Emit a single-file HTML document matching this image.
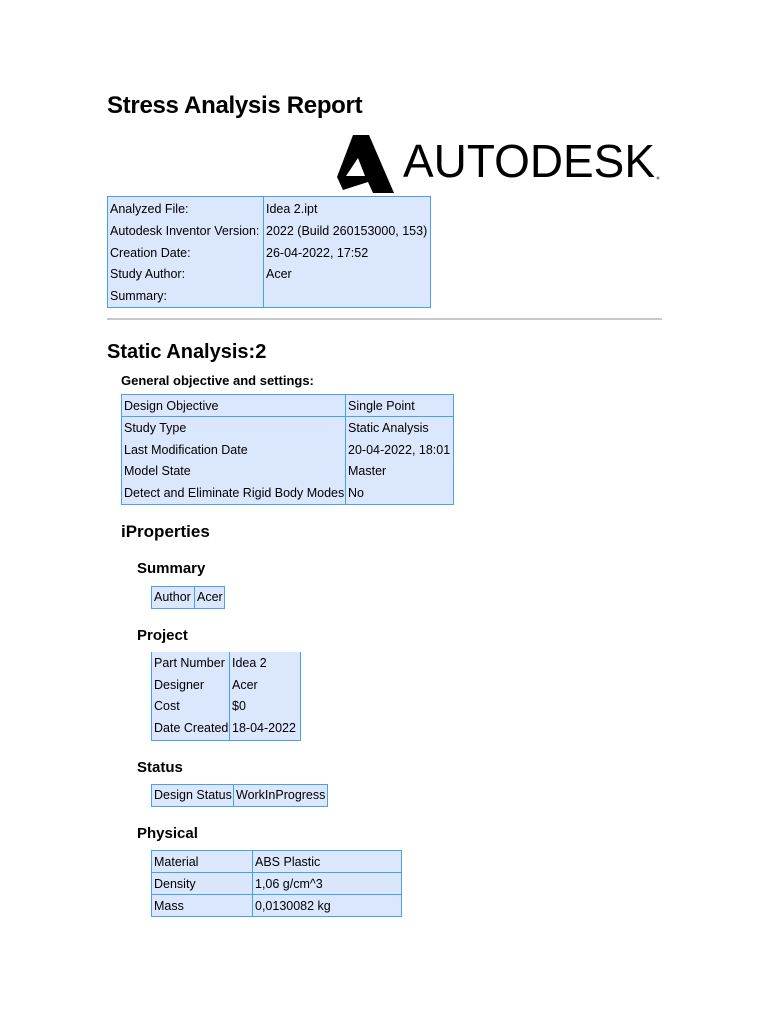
<!DOCTYPE html>
<html><head><meta charset="utf-8">
<style>
html,body{margin:0;padding:0;background:#fff;width:768px;height:1024px;overflow:hidden;position:relative;font-family:"DejaVu Sans Condensed","Liberation Sans",sans-serif;color:#000}
.a{position:absolute;white-space:nowrap}
.h{font-family:"Liberation Sans",sans-serif;font-weight:bold}
.t{position:absolute;background:#dbe7fc;border:1px solid #4a9ff0;box-sizing:border-box}
.v{position:absolute;top:0;bottom:0;width:1px;background:#4a9ff0}
.r{position:absolute;left:0;right:0;height:1px;background:#4a9ff0}
.c{position:absolute;font-family:"Liberation Sans",sans-serif;font-size:12.5px;line-height:20px;white-space:nowrap}
</style></head><body>
<div class="a h" style="left:107px;top:92px;font-size:24px;letter-spacing:-0.3px">Stress Analysis Report</div>
<svg class="a" style="left:0;top:0" width="768" height="220">
<path fill-rule="evenodd" d="M353,135 L369,135 L394,193 L373,193 L368,182 L343,190 L337,177 Z M358,158 L346,176 L365,176 Z" fill="#000"/>
<text x="403" y="177" font-family="Liberation Sans" font-size="46" fill="#000" textLength="252" lengthAdjust="spacingAndGlyphs">AUTODESK</text>
<circle cx="658" cy="178" r="1.5" fill="#888"/>
</svg>

<div class="t" style="left:107px;top:196px;width:324px;height:112px">
<div class="v" style="left:155px"></div>
<div class="c" style="left:2px;top:2px">Analyzed File:</div><div class="c" style="left:158px;top:2px">Idea 2.ipt</div>
<div class="c" style="left:2px;top:24px">Autodesk Inventor Version:</div><div class="c" style="left:158px;top:24px">2022 (Build 260153000, 153)</div>
<div class="c" style="left:2px;top:46px">Creation Date:</div><div class="c" style="left:158px;top:46px">26-04-2022, 17:52</div>
<div class="c" style="left:2px;top:67px">Study Author:</div><div class="c" style="left:158px;top:67px">Acer</div>
<div class="c" style="left:2px;top:89px">Summary:</div>
</div>

<div class="a" style="left:107px;top:318px;width:555px;height:2px;background:#c8c8c8"></div>

<div class="a h" style="left:107px;top:341px;font-size:20px">Static Analysis:2</div>
<div class="a h" style="left:121px;top:373px;font-size:13px">General objective and settings:</div>
<div class="t" style="left:121px;top:394px;width:333px;height:111px">
<div class="v" style="left:223px"></div>
<div class="r" style="top:21px"></div>
<div class="c" style="left:2px;top:1px">Design Objective</div><div class="c" style="left:226px;top:1px">Single Point</div>
<div class="c" style="left:2px;top:23px">Study Type</div><div class="c" style="left:226px;top:23px">Static Analysis</div>
<div class="c" style="left:2px;top:45px">Last Modification Date</div><div class="c" style="left:226px;top:45px">20-04-2022, 18:01</div>
<div class="c" style="left:2px;top:66px">Model State</div><div class="c" style="left:226px;top:66px">Master</div>
<div class="c" style="left:2px;top:88px">Detect and Eliminate Rigid Body Modes</div><div class="c" style="left:226px;top:88px">No</div>
</div>

<div class="a h" style="left:121px;top:522px;font-size:17px">iProperties</div>
<div class="a h" style="left:137px;top:560px;font-size:15px">Summary</div>
<div class="t" style="left:151px;top:586px;width:74px;height:23px">
<div class="v" style="left:42px"></div>
<div class="c" style="left:2px;top:0px">Author</div><div class="c" style="left:45px;top:0px">Acer</div>
</div>

<div class="a h" style="left:137px;top:627px;font-size:15px">Project</div>
<div class="t" style="left:151px;top:652px;width:150px;height:89px;border-top:none">
<div class="v" style="left:77px"></div>
<div class="c" style="left:2px;top:1px">Part Number</div><div class="c" style="left:80px;top:1px">Idea 2</div>
<div class="c" style="left:2px;top:23px">Designer</div><div class="c" style="left:80px;top:23px">Acer</div>
<div class="c" style="left:2px;top:44px">Cost</div><div class="c" style="left:80px;top:44px">$0</div>
<div class="c" style="left:2px;top:66px">Date Created</div><div class="c" style="left:80px;top:66px">18-04-2022</div>
</div>

<div class="a h" style="left:137px;top:759px;font-size:15px">Status</div>
<div class="t" style="left:151px;top:784px;width:177px;height:23px">
<div class="v" style="left:81px"></div>
<div class="c" style="left:2px;top:0px">Design Status</div><div class="c" style="left:84px;top:0px">WorkInProgress</div>
</div>

<div class="a h" style="left:137px;top:825px;font-size:15px">Physical</div>
<div class="t" style="left:151px;top:850px;width:251px;height:67px">
<div class="v" style="left:100px"></div>
<div class="r" style="top:21px"></div>
<div class="r" style="top:43px"></div>
<div class="c" style="left:2px;top:1px">Material</div><div class="c" style="left:103px;top:1px">ABS Plastic</div>
<div class="c" style="left:2px;top:23px">Density</div><div class="c" style="left:103px;top:23px">1,06 g/cm^3</div>
<div class="c" style="left:2px;top:45px">Mass</div><div class="c" style="left:103px;top:45px">0,0130082 kg</div>
</div>
</body></html>
